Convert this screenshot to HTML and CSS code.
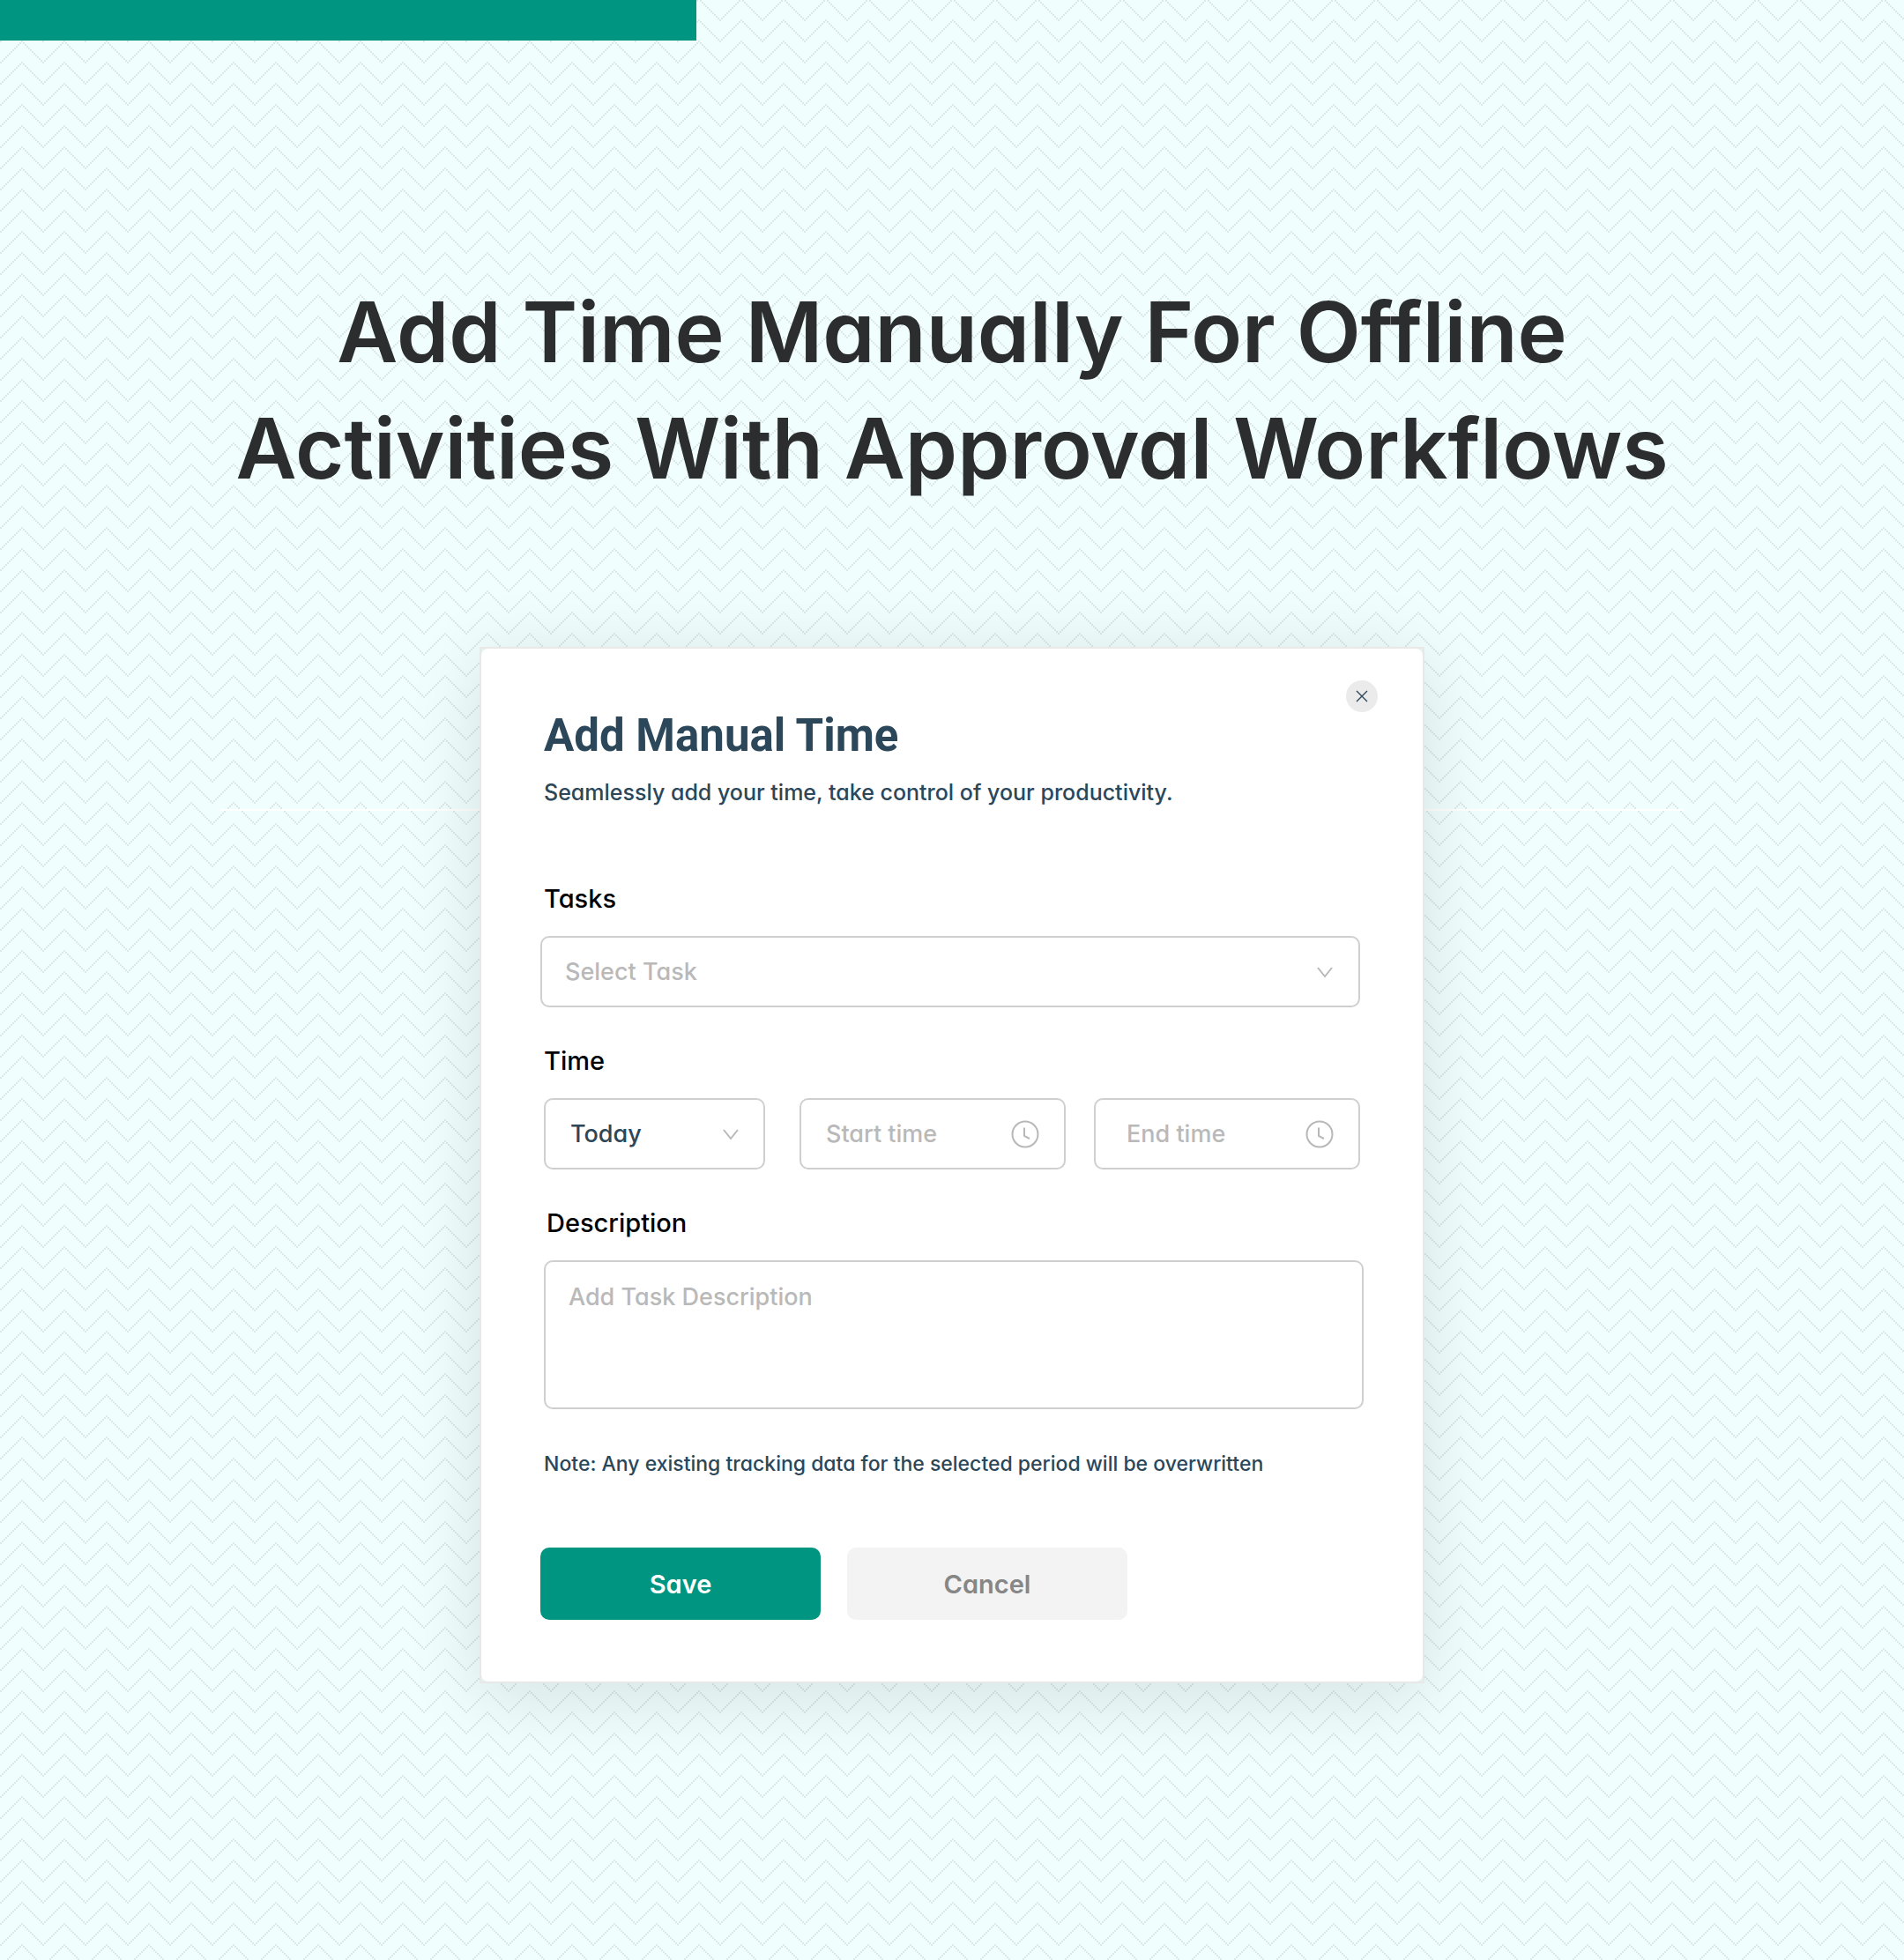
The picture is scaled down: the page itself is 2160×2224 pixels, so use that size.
FILE: index.html
```html
<!DOCTYPE html>
<html lang="en">
<head>
  <meta charset="UTF-8">
  <title>Add Manual Time</title>
  <link rel="stylesheet" href="styles.css">
</head>
<body>

<div class="top-bar"></div>

<main class="page">
  <h1 class="headline">Add Time Manually For Offline<br>Activities With Approval Workflows</h1>

  <section class="modal-frame">
    <form class="modal">
      <button type="button" class="close" aria-label="Close">
        <svg width="14" height="14" viewBox="0 0 14 14"><path d="M1 1L13 13M13 1L1 13"/></svg>
      </button>

      <h2 class="title">Add Manual Time</h2>
      <p class="subtitle">Seamlessly add your time, take control of your productivity.</p>

      <div class="field task-field">
        <label for="task">Tasks</label>
        <div class="control">
          <select id="task" class="empty">
            <option>Select Task</option>
          </select>
          <svg class="chevron" width="20" height="14" viewBox="0 0 20 14"><path d="M2 2L10 12L18 2"/></svg>
        </div>
      </div>

      <div class="field time-field">
        <label for="day">Time</label>
        <div class="time-row">
          <div class="control day">
            <select id="day">
              <option>Today</option>
            </select>
            <svg class="chevron" width="20" height="14" viewBox="0 0 20 14"><path d="M2 2L10 12L18 2"/></svg>
          </div>
          <div class="control start">
            <input id="start" type="text" placeholder="Start time" aria-label="Start time">
            <svg class="clock" width="32" height="32" viewBox="0 0 32 32"><circle cx="16" cy="16" r="14.5"/><path d="M15 8.5V18L21 21"/></svg>
          </div>
          <div class="control end">
            <input id="end" type="text" placeholder="End time" aria-label="End time">
            <svg class="clock" width="32" height="32" viewBox="0 0 32 32"><circle cx="16" cy="16" r="14.5"/><path d="M15 8.5V18L21 21"/></svg>
          </div>
        </div>
      </div>

      <div class="field description-field">
        <label for="description">Description</label>
        <textarea id="description" placeholder="Add Task Description"></textarea>
      </div>

      <p class="note">Note: Any existing tracking data for the selected period will be overwritten</p>

      <div class="actions">
        <button type="submit" class="btn save">Save</button>
        <button type="button" class="btn cancel">Cancel</button>
      </div>
    </form>
  </section>
</main>

</body>
</html>
```
FILE: styles.css
```css
* { box-sizing: border-box; }

body {
  margin: 0;
  min-height: 100vh;
  font-family: Inter, "Open Sans", sans-serif;
  font-feature-settings: "cv11";
  font-weight: 500;
  color: #2b4759;
  /* 48x24 zigzag tile */
  background: #f0fffe url("data:image/svg+xml,%3Csvg xmlns='http://www.w3.org/2000/svg' width='48' height='24' shape-rendering='crispEdges'%3E%3Cpath fill='none' stroke='%23dde9e9' stroke-width='2' d='M0 23h2m0-2h2m0-2h2m0-2h2m0-2h2m0-2h2m0-2h2m0-2h2m0-2h2m0-2h2m0-2h2m0-2h2m0 22h2m0-22h2m0 2h2m0 2h2m0 2h2m0 2h2m0 2h2m0 2h2m0 2h2m0 2h2m0 2h2m0 2h2'/%3E%3C/svg%3E");
}

h1, h2, p { margin: 0; }
button, input, select, textarea { font: inherit; font-feature-settings: inherit; }

.top-bar { width: 36.57%; height: 46px; background: #009580; }

.page {
  position: relative;
  z-index: 0;
  display: flex;
  flex-direction: column;
  align-items: center;
  gap: 159px;
  padding: 265px 0 314px;
}

.headline {
  font-size: 95px;
  line-height: 132px;
  font-weight: 600;
  text-align: center;
  color: #2c2d2f;
}

.modal-frame {
  position: relative;
  width: 100%;
  max-width: 1072px;
  border: 2px solid #e9e8e8;
  background: #e4f3f2;
  box-shadow: 0 14px 80px rgba(0, 0, 0, 0.12);
}

/* white rule running behind the modal */
.modal-frame::before {
  content: "";
  position: absolute;
  z-index: -1;
  top: 182px;
  left: -296px;
  right: -296px;
  height: 2px;
  background: #fff;
}

.modal {
  position: relative;
  padding: 67px 67px 70px;
  background: #fff;
  border-radius: 8px;
}

.close {
  position: absolute;
  top: 36px;
  right: 51px;
  display: flex;
  align-items: center;
  justify-content: center;
  width: 36px;
  height: 36px;
  padding: 0;
  border: 0;
  border-radius: 50%;
  background: #ebebeb;
}
.close svg { stroke: #2b4759; stroke-width: 1.4; }

.title {
  margin-left: 4px;
  font-family: Roboto, sans-serif;
  font-size: 51px;
  line-height: 64px;
  font-weight: 700;
}
.subtitle { margin: 14px 0 83px 4px; font-size: 25px; line-height: 36px; }

.field { margin-bottom: 41px; }
.field label {
  display: block;
  margin: 0 0 22px 4px;
  font-size: 29px;
  line-height: 40px;
  color: #000;
}

.control { position: relative; }
.control select, .control input, textarea {
  display: block;
  width: 100%;
  height: 81px;
  padding: 0 28px;
  border: 2px solid #cfcfcf;
  border-radius: 10px;
  background: #fff;
  font-size: 27px;
  color: #2b4759;
  appearance: none;
}
.control select.empty, input::placeholder, textarea::placeholder { color: #b9b9b9; opacity: 1; }

.chevron, .clock {
  position: absolute;
  top: 50%;
  right: 30px;
  transform: translateY(-50%);
  pointer-events: none;
  fill: none;
  stroke: #b8b8b8;
  stroke-width: 2;
}
.chevron { right: 29px; }

.task-field .control { margin-right: 4px; }
.task-field select { padding: 0 26px; }
.task-field .chevron { right: 30px; }

.time-row { display: flex; margin: 0 4px; }
.day { flex: 251; margin-right: 39px; }
.day select { padding: 0 28px; }
.start { flex: 302; margin-right: 32px; }
.end { flex: 302; }
.end input { padding: 0 35px; }

.description-field label { margin-left: 7px; }
.description-field textarea {
  width: auto;
  min-width: calc(100% - 4px);
  height: 169px;
  margin-left: 4px;
  padding: 22px 26px;
  line-height: 36px;
  resize: none;
}

.note { margin: 46px 0 79px 4px; font-size: 23px; line-height: 32px; }

.actions { display: flex; gap: 30px; }
.btn {
  width: 318px;
  height: 82px;
  border: 0;
  border-radius: 10px;
  font-size: 29px;
  font-weight: 600;
}
.save { background: #009580; color: #fff; }
.cancel { background: #f3f3f3; color: #868686; }
```
